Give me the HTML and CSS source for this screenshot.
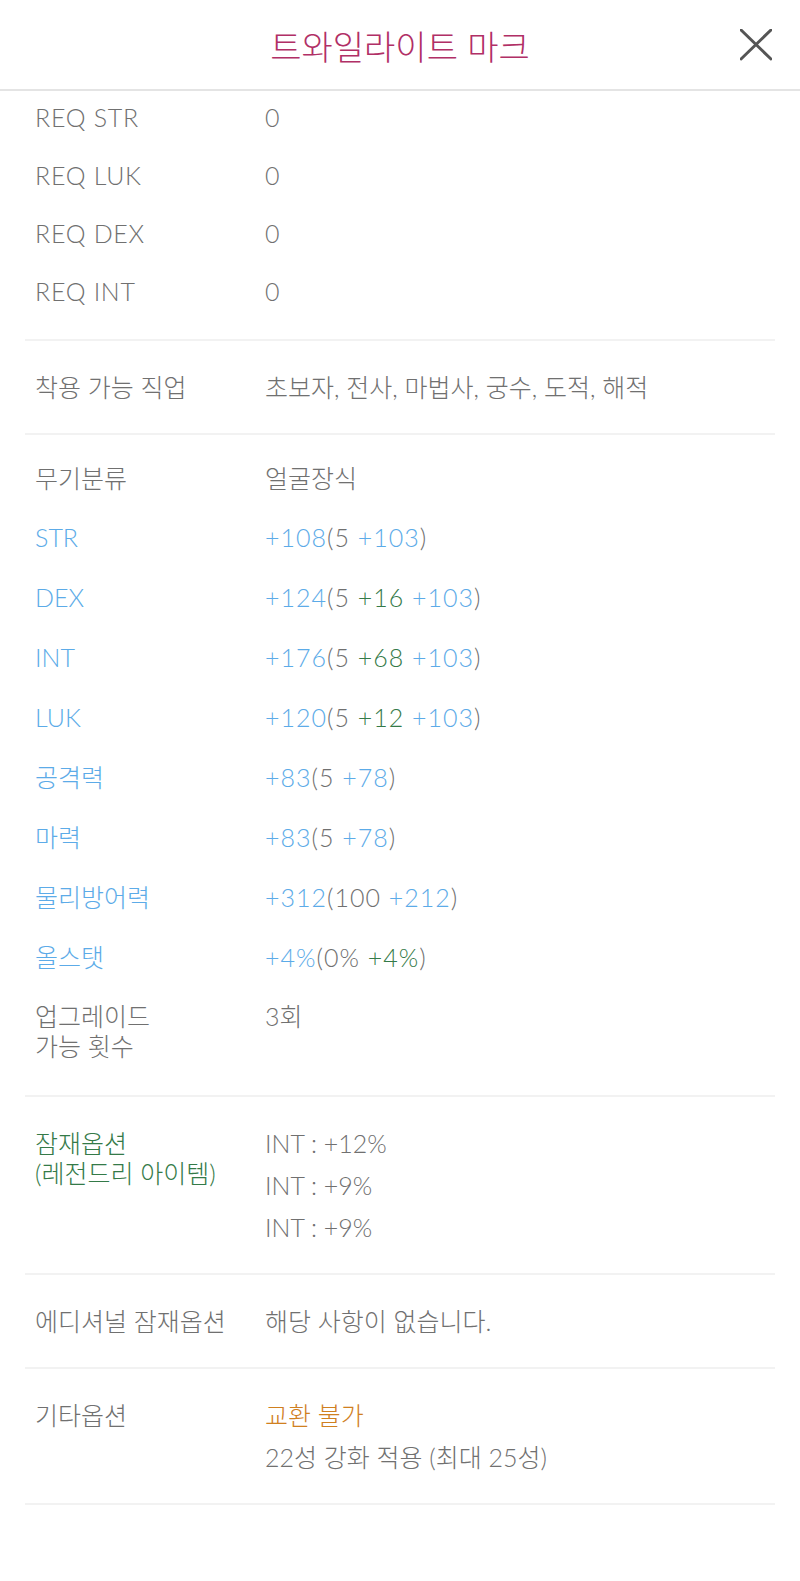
FILE: index.html
```html
<!DOCTYPE html>
<html lang="ko">
<head>
  <meta charset="UTF-8">
  <title>트와일라이트 마크</title>
  <link rel="stylesheet" href="styles.css">
</head>
<body>

  <header class="modal-header">
    <span></span>
    <h1 class="modal-title">트와일라이트 마크</h1>
    <button class="close-btn" type="button" aria-label="닫기">
      <svg width="32" height="32" viewBox="0 0 32 32">
        <path d="M1 1 L31 30 M31 1 L1 30" stroke="#555" stroke-width="3" stroke-linecap="round" fill="none"/>
      </svg>
    </button>
  </header>

  <div class="detail">
    <!-- 요구 능력치 -->
    <section class="group group-top">
      <div class="row"><div class="label">REQ STR</div><div class="value">0</div></div>
      <div class="row"><div class="label">REQ LUK</div><div class="value">0</div></div>
      <div class="row"><div class="label">REQ DEX</div><div class="value">0</div></div>
      <div class="row"><div class="label">REQ INT</div><div class="value">0</div></div>
    </section>

    <section class="group">
      <div class="row"><div class="label">착용 가능 직업</div><div class="value">초보자, 전사, 마법사, 궁수, 도적, 해적</div></div>
    </section>

    <!-- 기본 옵션 -->
    <section class="group group-stats">
      <div class="row"><div class="label">무기분류</div><div class="value">얼굴장식</div></div>
      <div class="row stat"><div class="label">STR</div><div class="value"><span class="blue">+108</span>(5 <span class="blue">+103</span>)</div></div>
      <div class="row stat"><div class="label">DEX</div><div class="value"><span class="blue">+124</span>(5 <span class="green">+16</span> <span class="blue">+103</span>)</div></div>
      <div class="row stat"><div class="label">INT</div><div class="value"><span class="blue">+176</span>(5 <span class="green">+68</span> <span class="blue">+103</span>)</div></div>
      <div class="row stat"><div class="label">LUK</div><div class="value"><span class="blue">+120</span>(5 <span class="green">+12</span> <span class="blue">+103</span>)</div></div>
      <div class="row stat"><div class="label">공격력</div><div class="value"><span class="blue">+83</span>(5 <span class="blue">+78</span>)</div></div>
      <div class="row stat"><div class="label">마력</div><div class="value"><span class="blue">+83</span>(5 <span class="blue">+78</span>)</div></div>
      <div class="row stat"><div class="label">물리방어력</div><div class="value"><span class="blue">+312</span>(100 <span class="blue">+212</span>)</div></div>
      <div class="row stat"><div class="label">올스탯</div><div class="value"><span class="blue">+4%</span>(0% <span class="green">+4%</span>)</div></div>
      <div class="row"><div class="label">업그레이드<br>가능 횟수</div><div class="value">3회</div></div>
    </section>

    <!-- 잠재옵션 -->
    <section class="group">
      <div class="row">
        <div class="label green">잠재옵션<br>(레전드리 아이템)</div>
        <div class="value lines">
          <div>INT : +12%</div>
          <div>INT : +9%</div>
          <div>INT : +9%</div>
        </div>
      </div>
    </section>

    <section class="group">
      <div class="row"><div class="label">에디셔널 잠재옵션</div><div class="value">해당 사항이 없습니다.</div></div>
    </section>

    <section class="group">
      <div class="row">
        <div class="label">기타옵션</div>
        <div class="value lines">
          <div class="orange">교환 불가</div>
          <div>22성 강화 적용 (최대 25성)</div>
        </div>
      </div>
    </section>
  </div>

</body>
</html>
```

FILE: styles.css
```css
* {
  box-sizing: border-box;
}

body {
  margin: 0;
  padding: 0;
  background: #fff;
  font-family: 'Lato', 'Noto Sans CJK KR', sans-serif;
  font-size: 25px;
  font-weight: 300;
  color: #707070;
}

/* Header */
.modal-header {
  display: grid;
  grid-template-columns: 1fr auto 1fr;
  align-items: center;
  height: 91px;
  border-bottom: 2px solid #e4e4e4;
}

.modal-title {
  margin: 0;
  font-size: 34px;
  font-weight: 300;
  color: #b12f66;
  padding-top: 2px;
}

.close-btn {
  justify-self: end;
  margin-right: 28px;
  padding: 0;
  border: none;
  background: none;
  width: 32px;
  height: 32px;
  cursor: pointer;
}

.close-btn svg {
  display: block;
}

/* Detail list */
.detail {
  padding: 0 25px;
}

.group {
  padding: 17px 0;
  border-bottom: 2px solid #f2f2f2;
}

.group-top {
  margin-top: -3px;
  padding: 0 0 19px;
}

.group-top .label {
  letter-spacing: 0.7px;
}

.group-stats {
  padding: 14px 0 20px;
}

.row {
  display: flex;
  padding: 14px 10px;
  line-height: 30px;
}

.stat {
  padding: 15px 10px;
}

.label {
  width: 230px;
  flex-shrink: 0;
}

.value {
  flex: 1;
}

.stat .value {
  letter-spacing: 1px;
}

.lines {
  display: flex;
  flex-direction: column;
  gap: 12px;
}

.stat .label,
.blue {
  color: #5cabe8;
}

.green {
  color: #347a48;
}

.orange {
  color: #d0801f;
}
```
